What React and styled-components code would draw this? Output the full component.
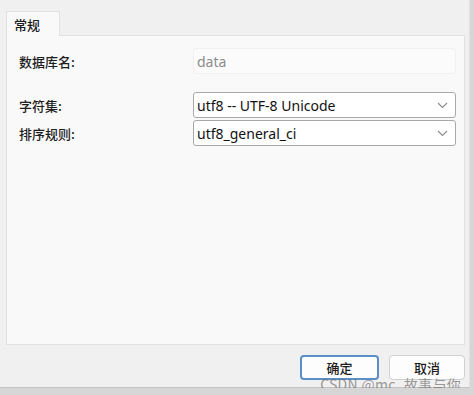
import React from 'react';
import styled, { createGlobalStyle } from 'styled-components';

const GlobalStyle = createGlobalStyle`
  html, body {
    margin: 0;
    padding: 0;
    background: #d6d6d6;
  }
  body {
    font-family: "Noto Sans", "Noto Sans CJK SC", sans-serif;
  }
`;

const Window = styled.div`
  position: relative;
  width: 470px;
  height: 388px;
  box-sizing: border-box;
  background: #f0f0f0;
  border-bottom: 1px solid #c4c4c4;
  border-right: 1px solid #e2e2e2;
  padding: 10px 4px 0 6px;
  display: flex;
  flex-direction: column;
`;

const TabBar = styled.div`
  display: flex;
  height: 25px;
`;

const Tab = styled.div`
  width: 54px;
  box-sizing: border-box;
  background: #f9f9f9;
  border: 1px solid #e0e0e0;
  border-bottom: none;
  padding: 3px 0 0 7px;
  font-family: "Noto Sans CJK SC", sans-serif;
  font-size: 13px;
  font-weight: 500;
  color: #1a1a1a;
  position: relative;
  top: 1px;
`;

const Panel = styled.div`
  height: 310px;
  box-sizing: border-box;
  background: #f9f9f9;
  border: 1px solid #e0e0e0;
  padding: 12px 9px 0 11px;
`;

const Form = styled.div`
  display: grid;
  grid-template-columns: 175px 263px;
  align-items: center;
`;

const Label = styled.div`
  font-family: "Noto Sans CJK SC", sans-serif;
  font-size: 13px;
  font-weight: 500;
  color: #1e1e1e;
  padding-left: 1px;
  margin-top: ${p => p.$gap || 0}px;
`;

const Field = styled.div`
  height: 26px;
  box-sizing: border-box;
  display: flex;
  align-items: center;
  justify-content: space-between;
  padding: 0 7px 0 3px;
  margin-top: ${p => p.$gap || 0}px;
  border-radius: 3px;
  background: ${p => (p.$disabled ? '#fbfbfb' : '#ffffff')};
  border: 1px solid ${p => (p.$disabled ? '#f1f1f1' : '#a9a9a9')};
  font-family: "Noto Sans", sans-serif;
  font-size: 14px;
  color: ${p => (p.$disabled ? '#8c8c8c' : '#111111')};
`;

const Chevron = () => (
  <svg width="11" height="7" viewBox="0 0 11 7">
    <path d="M1 1 L5.5 5.5 L10 1" fill="none" stroke="#8a8a8a" strokeWidth="1.1" />
  </svg>
);

const Footer = styled.div`
  display: flex;
  justify-content: flex-end;
  gap: 10px;
  padding-top: 10px;
`;

const Button = styled.button`
  width: ${p => (p.$primary ? 79 : 76)}px;
  height: 25px;
  box-sizing: border-box;
  border-radius: 4px;
  background: #fdfdfd;
  border: ${p => (p.$primary ? '2px solid #5a8fc8' : '1px solid #d0d0d0')};
  font-family: "Noto Sans CJK SC", sans-serif;
  font-size: 13px;
  font-weight: 500;
  color: #1a1a1a;
  padding: 0;
`;

const Watermark = styled.div`
  position: absolute;
  right: 8px;
  bottom: -7px;
  font-family: "Noto Sans CJK SC", sans-serif;
  font-size: 14px;
  letter-spacing: 0.3px;
  color: rgba(110, 110, 110, 0.7);
  pointer-events: none;
`;

export default function App() {
  return (
    <>
      <GlobalStyle />
      <Window>
        <TabBar>
          <Tab>常规</Tab>
        </TabBar>
        <Panel>
          <Form>
            <Label>数据库名:</Label>
            <Field $disabled>data</Field>
            <Label $gap={18}>字符集:</Label>
            <Field $gap={18}>
              utf8 -- UTF-8 Unicode
              <Chevron />
            </Field>
            <Label $gap={2}>排序规则:</Label>
            <Field $gap={2}>
              utf8_general_ci
              <Chevron />
            </Field>
          </Form>
        </Panel>
        <Footer>
          <Button $primary>确定</Button>
          <Button>取消</Button>
        </Footer>
        <Watermark>CSDN @mc_故事与你</Watermark>
      </Window>
    </>
  );
}
